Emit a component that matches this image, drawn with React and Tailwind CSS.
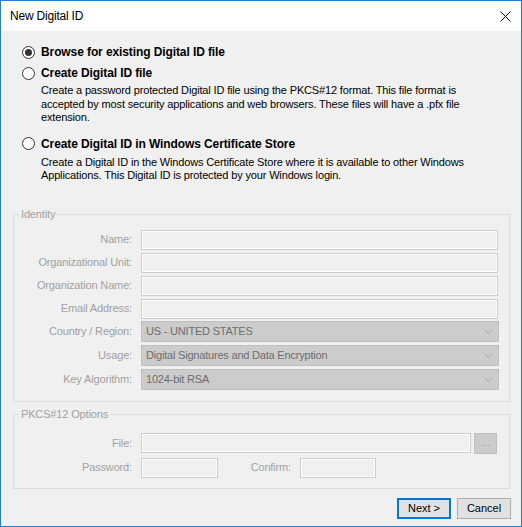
import React from "react";

const font = "font-['Liberation_Sans',Arial,sans-serif]";

const Radio = ({ checked, label }) => (
  <div className="flex items-center h-[16px] pl-[21px]">
    <span className="w-[13px] h-[13px] rounded-full border border-[#333333] bg-white flex items-center justify-center shrink-0">
      {checked && <span className="w-[7px] h-[7px] rounded-full bg-[#333333]" />}
    </span>
    <span className="ml-[6px] text-[12px] font-bold text-black whitespace-nowrap tracking-[-0.1px]">{label}</span>
  </div>
);

const TextBox = ({ w = "w-[357px]" }) => (
  <div className={`${w} h-[20px] border border-[#cccccc] bg-[#f0f0f0] shadow-[inset_0_0_0_1px_#ffffff]`} />
);

const Combo = ({ value }) => (
  <div className="w-[358px] h-[21px] border border-[#bfbfbf] bg-[#cccccc] flex items-center justify-between pl-[4px] pr-[5px]">
    <span className="text-[11px] tracking-[-0.2px] text-[#6d6d6d] whitespace-nowrap">{value}</span>
    <svg width="9" height="5" viewBox="0 0 9 5" className="shrink-0">
      <path d="M0.5 0.5 L4.5 4.5 L8.5 0.5" fill="none" stroke="#a6a6a6" strokeWidth="1" />
    </svg>
  </div>
);

const Row = ({ label, className = "", children }) => (
  <div className={`flex items-center ${className}`}>
    <div className="w-[118px] text-right text-[11px] tracking-[-0.15px] text-[#a0a0a0] whitespace-nowrap">{label}</div>
    <div className="ml-[9px]">{children}</div>
  </div>
);

const Group = ({ title, className = "", children }) => (
  <div className={`relative ml-[12px] w-[497px] border border-[#dcdcdc] ${className}`}>
    <span className="absolute -top-[8px] left-[5px] px-[2px] bg-[#f0f0f0] text-[11px] leading-[14px] tracking-[-0.15px] text-[#a0a0a0]">
      {title}
    </span>
    {children}
  </div>
);

export default function App() {
  return (
    <div className={`w-[522px] h-[527px] border border-[#1c7fd6] bg-[#f0f0f0] flex flex-col ${font}`}>
      {/* Title bar */}
      <div className="h-[30px] bg-white flex items-center justify-between pl-[9px] pr-[10px] shrink-0">
        <span className="text-[12px] tracking-[-0.2px] text-black">New Digital ID</span>
        <svg width="11" height="11" viewBox="0 0 11 11">
          <path d="M0.5 0.5 L10.5 10.5 M10.5 0.5 L0.5 10.5" stroke="#111111" strokeWidth="1" />
        </svg>
      </div>

      {/* Options */}
      <div className="mt-[13px]">
        <Radio checked label="Browse for existing Digital ID file" />
      </div>
      <div className="mt-[5px]">
        <Radio label="Create Digital ID file" />
      </div>
      <p className="mt-[3px] pl-[40px] text-[11px] leading-[13.5px] tracking-[-0.15px] text-black whitespace-nowrap">
        Create a password protected Digital ID file using the PKCS#12 format. This file format is
        <br />
        accepted by most security applications and web browsers. These files will have a .pfx file
        <br />
        extension.
      </p>
      <div className="mt-[11px]">
        <Radio label="Create Digital ID in Windows Certificate Store" />
      </div>
      <p className="mt-[4px] pl-[40px] text-[11px] leading-[13.5px] tracking-[-0.15px] text-black whitespace-nowrap">
        Create a Digital ID in the Windows Certificate Store where it is available to other Windows
        <br />
        Applications. This Digital ID is protected by your Windows login.
      </p>

      {/* Identity */}
      <Group title="Identity" className="mt-[31px] h-[188px] pt-[15px]">
        <div className="flex flex-col">
          <Row label="Name:"><TextBox /></Row>
          <Row label="Organizational Unit:" className="mt-[3px]"><TextBox /></Row>
          <Row label="Organization Name:" className="mt-[3px]"><TextBox /></Row>
          <Row label="Email Address:" className="mt-[3px]"><TextBox /></Row>
          <Row label="Country / Region:" className="mt-[2px]"><Combo value="US - UNITED STATES" /></Row>
          <Row label="Usage:" className="mt-[3px]"><Combo value="Digital Signatures and Data Encryption" /></Row>
          <Row label="Key Algorithm:" className="mt-[3px]"><Combo value="1024-bit RSA" /></Row>
        </div>
      </Group>

      {/* PKCS#12 */}
      <Group title="PKCS#12 Options" className="mt-[12px] h-[75px] pt-[18px]">
        <Row label="File:">
          <div className="flex items-center">
            <TextBox w="w-[330px]" />
            <div className="ml-[3px] w-[23px] h-[21px] border border-[#bfbfbf] bg-[#cccccc] flex items-center justify-center text-[11px] leading-none text-[#a0a0a0] pb-[2px]">
              ...
            </div>
          </div>
        </Row>
        <Row label="Password:" className="mt-[4px]">
          <div className="flex items-center">
            <TextBox w="w-[77px]" />
            <span className="w-[73px] text-right text-[11px] tracking-[-0.15px] text-[#a0a0a0]">Confirm:</span>
            <div className="ml-[9px]">
              <TextBox w="w-[76px]" />
            </div>
          </div>
        </Row>
      </Group>

      {/* Buttons */}
      <div className="mt-[9px] flex justify-end gap-[6px] pr-[10px]">
        <button className="w-[54px] h-[21px] border-2 border-[#0078d7] bg-[#e1e1e1] text-[11px] text-black leading-none">
          Next &gt;
        </button>
        <button className="w-[54px] h-[21px] border border-[#adadad] bg-[#e1e1e1] text-[11px] text-black leading-none">
          Cancel
        </button>
      </div>
    </div>
  );
}
